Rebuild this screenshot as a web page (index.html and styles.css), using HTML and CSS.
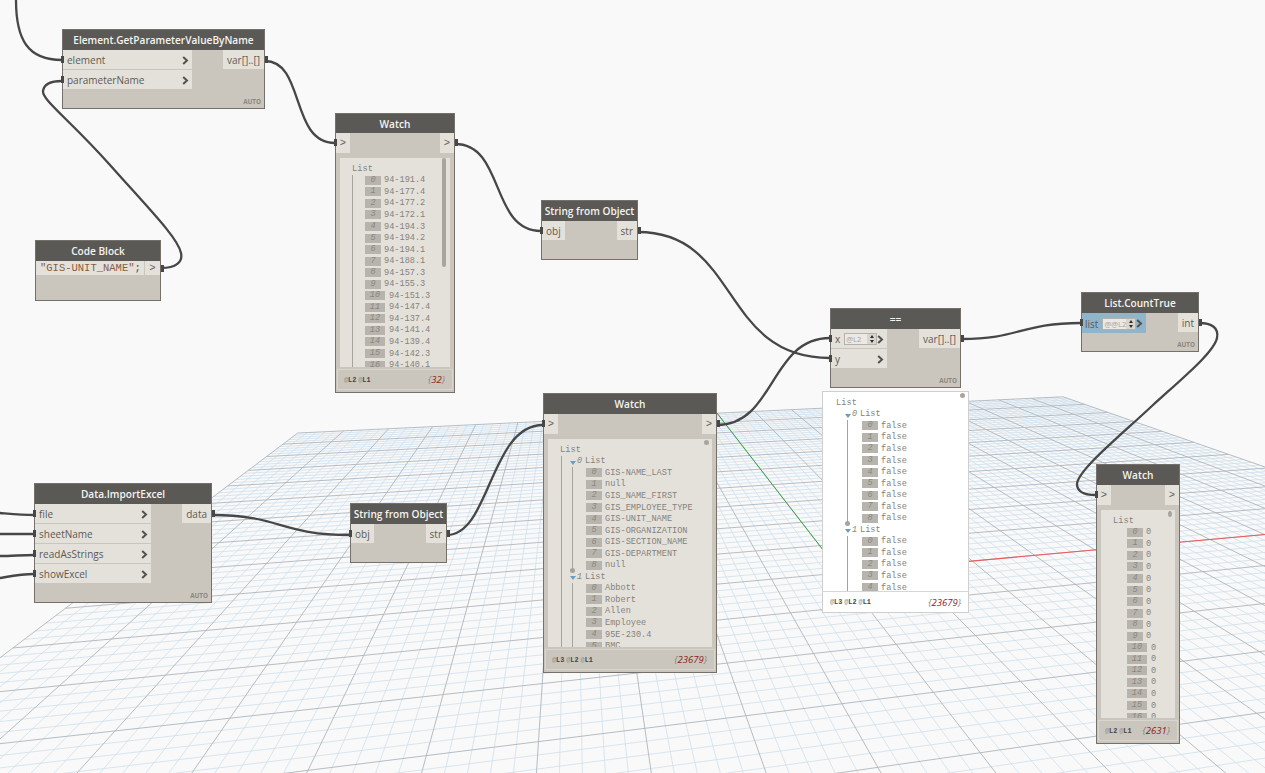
FILE: index.html
```html
<!DOCTYPE html>
<html lang="en">
<head>
<meta charset="utf-8">
<title>Dynamo graph</title>
<link rel="stylesheet" href="styles.css">
</head>
<body>
<main class="canvas">
  <svg class="layer" id="grid" width="1265" height="773"></svg>
  <svg class="layer wires" width="1265" height="773">
    <path d="M16 0C16 40 28 60 62 60"/>
    <path d="M161 268C176 268 183 262 181 253C178 238 150 210 110 165C70 120 42 100 43 91C44 84 50 81 62 81"/>
    <path d="M265 61C305 61 290 143 335 143"/>
    <path d="M455 144C505 144 490 231 541 231"/>
    <path d="M638 232C740 232 720 358 830 358"/>
    <path d="M717 425C775 425 770 338 830 338"/>
    <path d="M961 339C1020 339 1020 323 1081 323"/>
    <path d="M1199 323C1212 323 1219 328 1217 338C1214 352 1185 376 1153 405C1120 436 1078 470 1077 484C1077 492 1085 495 1096 495"/>
    <path d="M0 513C12 514 22 515 34 515"/>
    <path d="M0 534H34"/>
    <path d="M0 556C12 556 22 555 34 555"/>
    <path d="M0 578C12 576 22 574 34 574"/>
    <path d="M212 515C280 515 280 535 350 535"/>
    <path d="M447 535C490 535 490 425 543 425"/>
  </svg>

  <section class="node n-getparam">
    <header class="head">Element.GetParameterValueByName</header>
    <div class="ports">
      <div class="ins w-129">
        <div class="port in">element<svg class="chev" width="7" height="9" viewBox="0 0 7 9"><path d="M1.2 1L5 4.5L1.2 8"/></svg></div>
        <div class="port in">parameterName<svg class="chev" width="7" height="9" viewBox="0 0 7 9"><path d="M1.2 1L5 4.5L1.2 8"/></svg></div>
      </div>
      <div class="port out">var[]..[]</div>
    </div>
    <span class="auto">AUTO</span>
  </section>

  <section class="node n-code">
    <header class="head">Code Block</header>
    <div class="ports code-row">
      <div class="code"><span class="str">"GIS-UNIT_NAME"</span>;</div>
      <div class="port out gt">&gt;</div>
    </div>
  </section>

  <section class="node n-watch1">
    <header class="head">Watch</header>
    <div class="ports wports">
      <div class="port in gt">&gt;</div>
      <div class="port out gt">&gt;</div>
    </div>
    <div class="wbox">
      <div class="thumb"></div>
      <div class="row lbl">List</div>
      <div class="items">
        <div class="row"><span class="idx">0</span><span>94-191.4</span></div>
        <div class="row"><span class="idx">1</span><span>94-177.4</span></div>
        <div class="row"><span class="idx">2</span><span>94-177.2</span></div>
        <div class="row"><span class="idx">3</span><span>94-172.1</span></div>
        <div class="row"><span class="idx">4</span><span>94-194.3</span></div>
        <div class="row"><span class="idx">5</span><span>94-194.2</span></div>
        <div class="row"><span class="idx">6</span><span>94-194.1</span></div>
        <div class="row"><span class="idx">7</span><span>94-188.1</span></div>
        <div class="row"><span class="idx">8</span><span>94-157.3</span></div>
        <div class="row"><span class="idx">9</span><span>94-155.3</span></div>
        <div class="row"><span class="idx wide">10</span><span>94-151.3</span></div>
        <div class="row"><span class="idx wide">11</span><span>94-147.4</span></div>
        <div class="row"><span class="idx wide">12</span><span>94-137.4</span></div>
        <div class="row"><span class="idx wide">13</span><span>94-141.4</span></div>
        <div class="row"><span class="idx wide">14</span><span>94-139.4</span></div>
        <div class="row"><span class="idx wide">15</span><span>94-142.3</span></div>
        <div class="row"><span class="idx wide">16</span><span>94-140.1</span></div>
      </div>
    </div>
    <footer class="wfoot">
      <span class="levels"><span>@<b>L2</b></span><span>@<b>L1</b></span></span>
      <span class="count">{<i>32</i>}</span>
    </footer>
  </section>

  <section class="node n-sfo1">
    <header class="head">String from Object</header>
    <div class="ports">
      <div class="port in">obj</div>
      <div class="port out">str</div>
    </div>
  </section>

  <section class="node n-eq">
    <header class="head">==</header>
    <div class="ports">
      <div class="ins w-56">
        <div class="port in">x<span class="lace"><span class="lace-txt">@L2</span><span class="spin"><i class="up"></i><i class="down"></i></span></span><svg class="chev" width="7" height="9" viewBox="0 0 7 9"><path d="M1.2 1L5 4.5L1.2 8"/></svg></div>
        <div class="port in">y<svg class="chev" width="7" height="9" viewBox="0 0 7 9"><path d="M1.2 1L5 4.5L1.2 8"/></svg></div>
      </div>
      <div class="port out">var[]..[]</div>
    </div>
    <span class="auto">AUTO</span>
  </section>

  <section class="preview">
    <div class="wbox white">
      <div class="thumb dot"></div>
      <div class="row lbl">List</div>
      <div class="sub flat">
        <div class="row subhead"><i class="arrow"></i><span class="subi">0</span><span>List</span></div>
        <div class="items inner">
          <div class="row"><span class="idx">0</span><span>false</span></div>
          <div class="row"><span class="idx">1</span><span>false</span></div>
          <div class="row"><span class="idx">2</span><span>false</span></div>
          <div class="row"><span class="idx">3</span><span>false</span></div>
          <div class="row"><span class="idx">4</span><span>false</span></div>
          <div class="row"><span class="idx">5</span><span>false</span></div>
          <div class="row"><span class="idx">6</span><span>false</span></div>
          <div class="row"><span class="idx">7</span><span>false</span></div>
          <div class="row"><span class="idx">8</span><span>false</span></div>
          <i class="end"></i>
        </div>
        <div class="row subhead"><i class="arrow"></i><span class="subi">1</span><span>List</span></div>
        <div class="items inner">
          <div class="row"><span class="idx">0</span><span>false</span></div>
          <div class="row"><span class="idx">1</span><span>false</span></div>
          <div class="row"><span class="idx">2</span><span>false</span></div>
          <div class="row"><span class="idx">3</span><span>false</span></div>
          <div class="row"><span class="idx">4</span><span>false</span></div>
        </div>
      </div>
    </div>
    <footer class="wfoot plain">
      <span class="levels"><span>@<b>L3</b></span><span>@<b>L2</b></span><span>@<b>L1</b></span></span>
      <span class="count">{<i>23679</i>}</span>
    </footer>
  </section>

  <section class="node n-count">
    <header class="head">List.CountTrue</header>
    <div class="ports">
      <div class="port in blue">list<span class="lace wide-lace"><span class="lace-txt">@@L2</span><span class="spin"><i class="up"></i><i class="down"></i></span></span><svg class="chev" width="7" height="9" viewBox="0 0 7 9"><path d="M1.2 1L5 4.5L1.2 8"/></svg></div>
      <div class="port out">int</div>
    </div>
    <span class="auto">AUTO</span>
  </section>

  <section class="node n-watch2">
    <header class="head">Watch</header>
    <div class="ports wports">
      <div class="port in gt">&gt;</div>
      <div class="port out gt">&gt;</div>
    </div>
    <div class="wbox">
      <div class="thumb dot"></div>
      <div class="row lbl">List</div>
      <div class="sub">
        <div class="row subhead"><i class="arrow"></i><span class="subi">0</span><span>List</span></div>
        <div class="items inner">
          <div class="row"><span class="idx">0</span><span>GIS-NAME_LAST</span></div>
          <div class="row"><span class="idx">1</span><span>null</span></div>
          <div class="row"><span class="idx">2</span><span>GIS_NAME_FIRST</span></div>
          <div class="row"><span class="idx">3</span><span>GIS_EMPLOYEE_TYPE</span></div>
          <div class="row"><span class="idx">4</span><span>GIS-UNIT_NAME</span></div>
          <div class="row"><span class="idx">5</span><span>GIS-ORGANIZATION</span></div>
          <div class="row"><span class="idx">6</span><span>GIS-SECTION_NAME</span></div>
          <div class="row"><span class="idx">7</span><span>GIS-DEPARTMENT</span></div>
          <div class="row"><span class="idx">8</span><span>null</span></div>
          <i class="end"></i>
        </div>
        <div class="row subhead"><i class="arrow"></i><span class="subi">1</span><span>List</span></div>
        <div class="items inner">
          <div class="row"><span class="idx">0</span><span>Abbott</span></div>
          <div class="row"><span class="idx">1</span><span>Robert</span></div>
          <div class="row"><span class="idx">2</span><span>Allen</span></div>
          <div class="row"><span class="idx">3</span><span>Employee</span></div>
          <div class="row"><span class="idx">4</span><span>95E-230.4</span></div>
          <div class="row"><span class="idx">5</span><span>BMC</span></div>
        </div>
      </div>
    </div>
    <footer class="wfoot">
      <span class="levels"><span>@<b>L3</b></span><span>@<b>L2</b></span><span>@<b>L1</b></span></span>
      <span class="count">{<i>23679</i>}</span>
    </footer>
  </section>

  <section class="node n-watch3">
    <header class="head">Watch</header>
    <div class="ports wports">
      <div class="port in gt">&gt;</div>
      <div class="port out free gt">&gt;</div>
    </div>
    <div class="wbox">
      <div class="thumb dot oval"></div>
      <div class="row lbl">List</div>
      <div class="items bare">
        <div class="row"><span class="idx">0</span><span>0</span></div>
        <div class="row"><span class="idx">1</span><span>0</span></div>
        <div class="row"><span class="idx">2</span><span>0</span></div>
        <div class="row"><span class="idx">3</span><span>0</span></div>
        <div class="row"><span class="idx">4</span><span>0</span></div>
        <div class="row"><span class="idx">5</span><span>0</span></div>
        <div class="row"><span class="idx">6</span><span>0</span></div>
        <div class="row"><span class="idx">7</span><span>0</span></div>
        <div class="row"><span class="idx">8</span><span>0</span></div>
        <div class="row"><span class="idx">9</span><span>0</span></div>
        <div class="row"><span class="idx wide">10</span><span>0</span></div>
        <div class="row"><span class="idx wide">11</span><span>0</span></div>
        <div class="row"><span class="idx wide">12</span><span>0</span></div>
        <div class="row"><span class="idx wide">13</span><span>0</span></div>
        <div class="row"><span class="idx wide">14</span><span>0</span></div>
        <div class="row"><span class="idx wide">15</span><span>0</span></div>
        <div class="row"><span class="idx wide">16</span><span>0</span></div>
      </div>
    </div>
    <footer class="wfoot">
      <span class="levels"><span>@<b>L2</b></span><span>@<b>L1</b></span></span>
      <span class="count">{<i>2631</i>}</span>
    </footer>
  </section>

  <section class="node n-excel">
    <header class="head">Data.ImportExcel</header>
    <div class="ports">
      <div class="ins w-116">
        <div class="port in">file<svg class="chev" width="7" height="9" viewBox="0 0 7 9"><path d="M1.2 1L5 4.5L1.2 8"/></svg></div>
        <div class="port in">sheetName<svg class="chev" width="7" height="9" viewBox="0 0 7 9"><path d="M1.2 1L5 4.5L1.2 8"/></svg></div>
        <div class="port in">readAsStrings<svg class="chev" width="7" height="9" viewBox="0 0 7 9"><path d="M1.2 1L5 4.5L1.2 8"/></svg></div>
        <div class="port in">showExcel<svg class="chev" width="7" height="9" viewBox="0 0 7 9"><path d="M1.2 1L5 4.5L1.2 8"/></svg></div>
      </div>
      <div class="port out">data</div>
    </div>
    <span class="auto">AUTO</span>
  </section>

  <section class="node n-sfo2">
    <header class="head">String from Object</header>
    <div class="ports">
      <div class="port in">obj</div>
      <div class="port out">str</div>
    </div>
  </section>
</main>
<script src="grid.js"></script>
</body>
</html>
```

FILE: styles.css
```css
* { box-sizing: border-box; }
html, body { margin: 0; padding: 0; }
body { overflow: hidden; background: #f9f9f9; font-family: "Open Sans", sans-serif; }

.canvas { position: relative; width: 1265px; height: 773px; overflow: hidden; background: #f9f9f9; }
.layer { position: absolute; left: 0; top: 0; }

.g-minor { stroke: #cfe0ec; stroke-width: .8; }
.g-major { stroke: #aeb6bd; stroke-width: .9; }
.g-red { stroke: #ee5b5b; stroke-width: 1.1; }
.g-green { stroke: #3f9f45; stroke-width: 1; }

.wires path { fill: none; stroke: #474747; stroke-width: 2.3; stroke-linecap: round; }

.node { position: absolute; display: flex; flex-direction: column; background: #cac6be; border: 1px solid #75716a; color: #5d5a55; }
.head { flex: none; height: 20px; background: #5b5955; color: #f4f3f0; font-size: 10.1px; font-weight: 600; line-height: 21px; text-align: center; white-space: nowrap; }

.n-getparam { left: 62px; top: 29px; width: 203px; height: 80px; }
.n-code { left: 35px; top: 240px; width: 126px; height: 61px; }
.n-watch1 { left: 335px; top: 113px; width: 120px; height: 280px; }
.n-watch1 .head { height: 19px; line-height: 20px; }
.n-sfo1 { left: 541px; top: 200px; width: 97px; height: 60px; }
.n-eq { left: 830px; top: 308px; width: 131px; height: 80px; }
.n-count { left: 1081px; top: 292px; width: 118px; height: 60px; }
.n-watch2 { left: 543px; top: 393px; width: 174px; height: 280px; }
.n-watch3 { left: 1096px; top: 464px; width: 84px; height: 280px; }
.n-excel { left: 34px; top: 483px; width: 178px; height: 120px; }
.n-sfo2 { left: 350px; top: 503px; width: 97px; height: 60px; }

.ports { display: flex; justify-content: space-between; align-items: flex-start; }
.ins { display: flex; flex-direction: column; gap: 1px; }
.w-129 { width: 129px; }
.w-56 { width: 56px; }
.w-116 { width: 116px; }

.port { position: relative; display: flex; align-items: center; height: 19px; padding: 1px 4px 0; background: #e4e1db; font-size: 10px; white-space: nowrap; }
.port.in::before, .port.out::after { content: ""; position: absolute; top: 6px; width: 3px; height: 7px; background: #474747; }
.port.in::before { left: -2px; }
.port.out::after { right: -4px; }
.port.out.free::after { display: none; }
.chev { margin-left: auto; margin-right: -1px; flex: none; }
.chev path { fill: none; stroke: #55524e; stroke-width: 2; }
.port.blue { width: 64px; background: #90b5cb; height: 20px; padding-left: 3px; }

.auto { margin-top: auto; align-self: flex-end; padding: 0 3px 2px 0; font-size: 6.3px; font-weight: 700; line-height: 9px; color: #8a867f; }

.lace { display: flex; align-items: stretch; width: 35px; height: 12px; margin-left: 4px; background: #ece9e4; border: 1px solid #b5b2ab; }
.wide-lace { width: 34px; margin-left: 4px; }
.lace-txt { flex: 1; font-size: 7.6px; line-height: 10px; padding-left: 1px; color: #a7a49e; overflow: hidden; }
.spin { flex: none; width: 9px; display: flex; flex-direction: column; align-items: center; justify-content: space-around; background: #d8d5cf; }
.spin i { display: block; width: 0; height: 0; border-left: 2.5px solid transparent; border-right: 2.5px solid transparent; }
.spin .up { border-bottom: 3px solid #2e2d2b; }
.spin .down { border-top: 3px solid #2e2d2b; }

.code-row { height: 14px; align-items: stretch; }
.code { flex: 1; margin-right: 1px; background: #e4e1db; padding-left: 4px; font-family: "Liberation Mono", monospace; font-size: 10.5px; line-height: 14px; color: #4a4a4a; white-space: nowrap; }
.str { color: #8a5c3e; }
.port.gt { font-family: "Liberation Mono", monospace; font-size: 10.5px; color: #63605b; justify-content: center; padding: 0; width: 15px; }
.n-code .port.gt { height: 14px; }
.n-code .port.out::after { top: 4px; }

.wports { flex: none; height: 20px; }
.wports .port.gt { height: 20px; width: 14px; }
.wbox { position: relative; flex: 1; min-height: 0; margin: 5px 4px 0; padding-top: 5px; overflow: hidden; background: #e4e1db; font-family: "Liberation Mono", monospace; font-size: 8.6px; color: #85827b; }
.white { background: #fff; }
.row { display: flex; align-items: center; height: 11.55px; white-space: nowrap; }
.lbl { padding-left: 12px; letter-spacing: .1px; }
.idx { flex: none; width: 16px; height: 9px; margin-right: 3px; background: #b7b4ad; color: #8b8880; font-style: italic; font-size: 8.6px; line-height: 9px; text-align: center; }
.idx.wide { width: 20px; margin-right: 4px; }
.items { position: relative; margin-left: 12px; padding-left: 12px; border-left: 1px solid #a6a39c; }
.items.bare { margin-left: 13px; padding-left: 13px; border-left: 0; }
.sub { margin-left: 13px; padding-left: 0; border-left: 1px solid #a6a39c; }
.sub.flat { border-left: 0; margin-left: 14px; }
.subhead { position: relative; padding-left: 23px; gap: 3px; }
.subi { position: absolute; left: 15px; font-style: italic; color: #8b8880; }
.arrow { position: absolute; left: 8px; top: 5px; width: 0; height: 0; border-left: 3px solid transparent; border-right: 3px solid transparent; border-top: 4px solid #6b9dc4; }
.items.inner { margin-left: 10px; padding-left: 13px; }
.end { position: absolute; left: -3px; bottom: -2px; width: 5px; height: 5px; border-radius: 50%; background: #a6a39c; }
.thumb { position: absolute; top: 0; right: 4px; width: 4px; height: 109px; border-radius: 2px; background: #a8a59e; }
.thumb.dot { top: 1px; right: 3px; width: 5px; height: 5px; border-radius: 50%; }
.thumb.oval { right: 3px; width: 4px; height: 6px; }

.wfoot { flex: none; display: flex; align-items: center; justify-content: space-between; height: 21px; margin: 2px 1px; padding: 0 7px 0 6px; border: 1px solid #d8d5cf; }
.levels { display: flex; gap: 2px; font-family: "Liberation Mono", monospace; font-size: 6.8px; color: #97948d; }
.levels b { color: #46443f; }
.count { font-style: italic; font-size: 9.5px; color: #8a867f; }
.count i { color: #8e1c1c; }

.preview { position: absolute; left: 822px; top: 391px; width: 147px; height: 222px; display: flex; flex-direction: column; background: #fff; border: 1px solid #cfcfcf; }
.preview .wbox { margin: 0; }
.preview .lbl { padding-left: 13px; }
.preview .items.inner { margin-left: 10px; padding-left: 14px; }
.wfoot.plain { height: 21px; margin: 0; padding: 0 7px 0 7px; border: 0; border-top: 1px solid #d6d6d6; }
```

FILE: grid.js
```js
// Perspective floor grid: two line families, each converging on a vanishing point.
(function () {
  var svg = document.getElementById("grid");
  var NS = "http://www.w3.org/2000/svg";
  var HX = 572, HY = 226, VX = 4670;
  var K0 = -1.325, KS = 0.21, D0 = 0.00483, DS = 0.000246;
  var SUB = 5;

  function point(i, j) {
    var k = K0 + KS * i;
    var d = 1 / (D0 - DS * j);
    var span = VX - HX;
    var y = d * span / (span - K0 * d + d * k);
    return [HX + k * y, HY + y];
  }

  function line(a, b, cls) {
    var el = document.createElementNS(NS, "line");
    el.setAttribute("x1", a[0]);
    el.setAttribute("y1", a[1]);
    el.setAttribute("x2", b[0]);
    el.setAttribute("y2", b[1]);
    el.setAttribute("class", cls);
    svg.appendChild(el);
  }

  var JMAX = 16, IMAX = 20, n;
  for (var pass = 0; pass < 2; pass++) {
    var major = pass === 1;
    for (n = 0; n <= IMAX * SUB; n++) {
      if ((n % SUB === 0) === major) line(point(n / SUB, 0), point(n / SUB, JMAX), major ? "g-major" : "g-minor");
    }
    for (n = 0; n <= JMAX * SUB; n++) {
      if ((n % SUB === 0) === major) line(point(0, n / SUB), point(IMAX, n / SUB), major ? "g-major" : "g-minor");
    }
  }
  line(point(10, 10), point(20, 10), "g-red");
  line(point(10, 10), point(10, 0), "g-green");
})();
```
